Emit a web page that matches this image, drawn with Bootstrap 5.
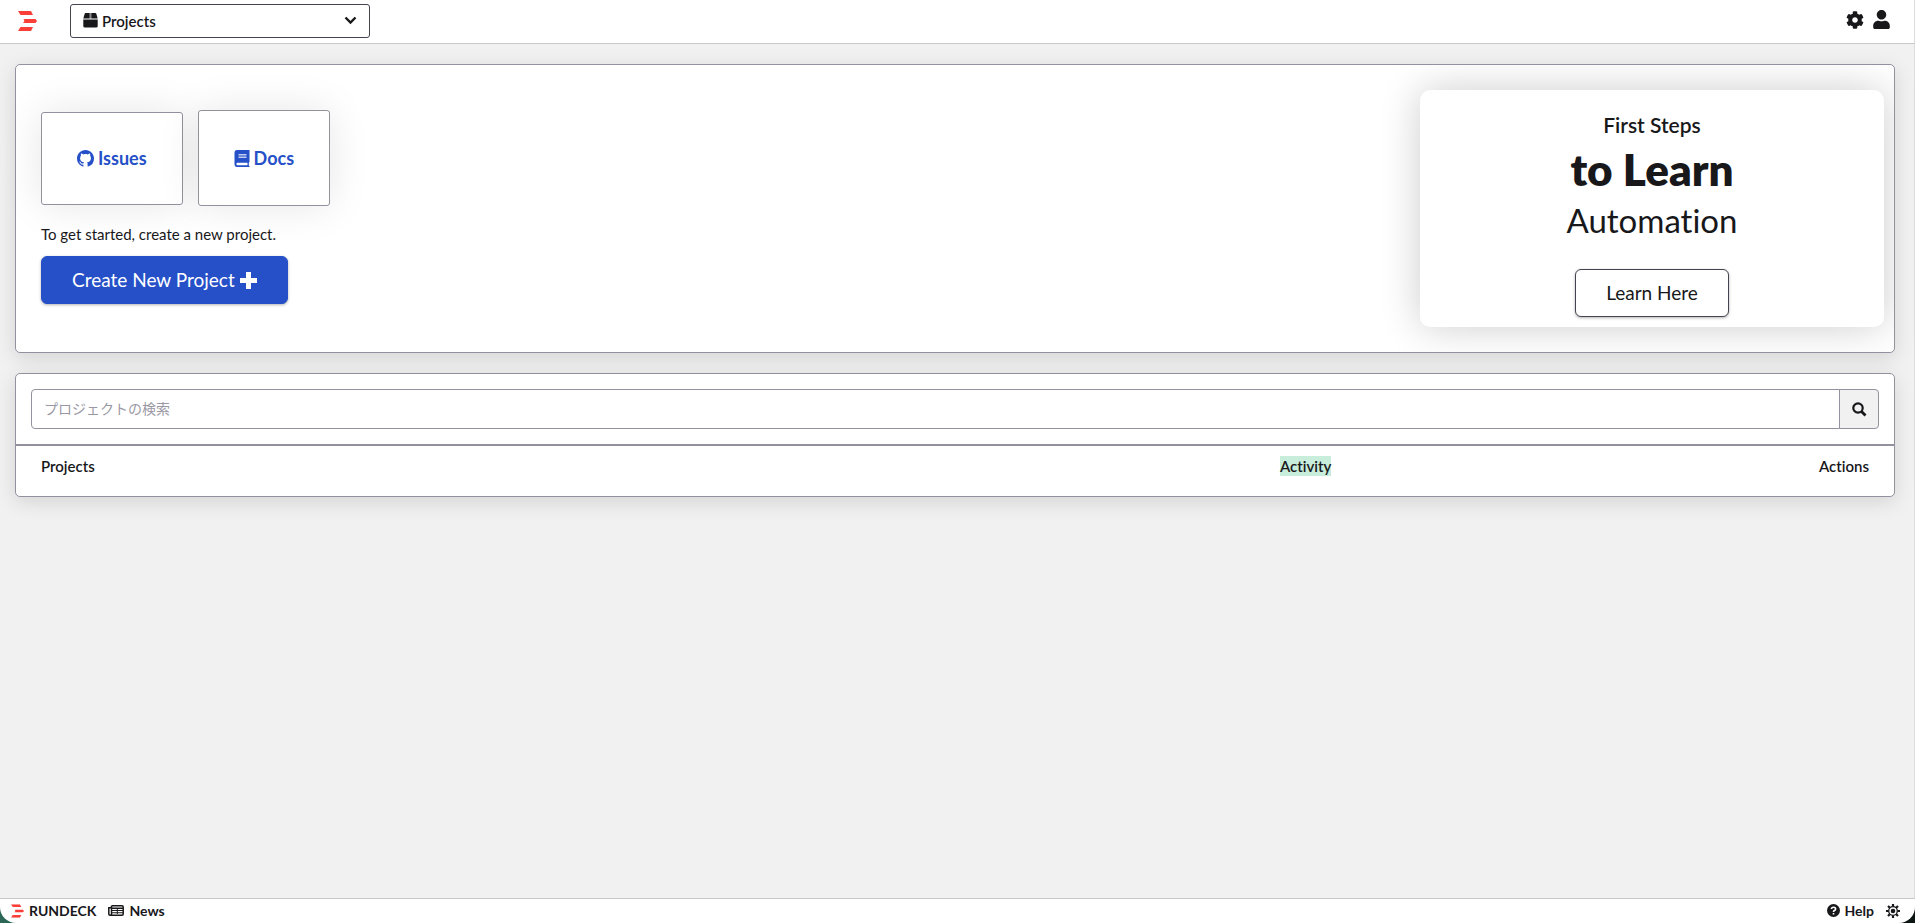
<!DOCTYPE html>
<html lang="en">
<head>
<meta charset="utf-8">
<meta name="viewport" content="width=device-width, initial-scale=1">
<title>Rundeck - Projects</title>
<link rel="stylesheet" href="https://cdn.jsdelivr.net/npm/bootstrap@5.3.0/dist/css/bootstrap.min.css">
<style>
  :root { --ink: #18181b; --line: #94919f; --blue: #2550c8; --red: #fa3f38; }
  body { font-family: Lato, "Noto Sans CJK JP", sans-serif; font-size: 15px; line-height: 20px; font-variant-ligatures: none; color: var(--ink); background: #f1f1f1; }
  svg { fill: currentColor; display: block; flex: none; }
  a { color: inherit; text-decoration: none; }
  .brand-mark { color: var(--red); }

  .top-bar { height: 44px; background: #fff; border-bottom: 1px solid #c8caca; border-right: 1px solid #dcdcdc; padding: 0 24px 4px 18px; }
  .top-bar .brand-mark { margin-right: 33px; margin-top: 3px; }
  .picker { width: 300px; height: 34px; margin-top: 2px; border: 1px solid #45434f; border-radius: 3px; background: #fff; color: var(--ink); font-weight: 600; padding: 0 12px; gap: 4px; }
  .icon-btn { border: 0; background: none; padding: 0; color: var(--ink); }

  .page-main { padding: 20px 19px 20px 15px; border-right: 1px solid #dcdcdc; gap: 20px; }
  .panel { background: #fff; border: 1px solid var(--line); border-radius: 5px; box-shadow: 0 5px 20px rgba(0, 0, 0, .12); }
  .welcome { padding: 25px 10px 25px 25px; }
  .intro { padding-top: 20px; }
  .tiles { gap: 15px; margin-bottom: 18px; }
  .tile { border: 1px solid var(--line); border-radius: 3px; background: #fff; color: var(--blue); font-size: 18px; font-weight: 700; padding: 0 35px; gap: 4px; box-shadow: 0 0 40px rgba(0, 0, 0, .1); }
  .tile-issues { height: 93px; }
  .tile-docs { height: 96px; }
  .btn-tall { height: 48px; font-size: 19px; padding: 0 30px; border-radius: 6px; box-shadow: 0 1px 3px rgba(0, 0, 0, .3); gap: 5px; }
  .btn-create { --bs-btn-bg: #2550c8; --bs-btn-border-color: #2550c8; --bs-btn-color: #fff; }
  .btn-learn { --bs-btn-border-color: #45434f; --bs-btn-color: #18181b; --bs-btn-bg: #fff; }
  .promo { width: 464px; max-width: 100%; background: #fff; border-radius: 10px; padding: 22px 0 10px; box-shadow: 0 0 40px rgba(0, 0, 0, .2); clip-path: inset(-25px -10px -25px -60px); }
  .promo-over { font-size: 21px; line-height: 26px; font-weight: 600; }
  .promo-head { font-size: 44px; line-height: 62px; font-weight: 800; margin: 0; }
  .promo-sub { font-size: 33px; line-height: 40px; margin-bottom: 29px; }

  .search-row { padding: 15px; border-bottom: 2px solid var(--line); }
  .search-row .form-control { height: 40px; border-color: var(--line); border-radius: 4px; font-size: 14px; padding: 0 12px 2px; }
  .search-row .form-control::placeholder { color: #9a98a4; opacity: 1; }
  .search-row .btn { width: 40px; padding: 0; border-color: var(--line); border-radius: 4px; background: #f1f1f1; color: var(--ink); }
  .project-list th { height: 50px; padding: 10px 25px 0 12px; font-weight: 600; vertical-align: top; }
  .project-list th:first-child { padding-left: 25px; }
  .picked { display: inline-block; background: #c8eddb; }

  .page-foot { background: linear-gradient(90deg, #2c6656 50%, #0b1512 50%); }
  .foot-bar { height: 25px; background: #fff; border-top: 1px solid #c8caca; border-radius: 0 0 16px 16px; padding: 0 15px 1px 11px; font-size: 14px; font-weight: 700; }
  .foot-link { gap: 5px; }
</style>
</head>
<body class="d-flex flex-column min-vh-100">

<svg width="0" height="0" class="position-absolute" aria-hidden="true">
  <symbol id="mark" viewBox="0 0 19 20"><path d="M0 0h13l2 4H2.500zM6.500 8H17.500l1.500 2-1.500 2H5l1.500-2-1-1.500zM2.500 16H15l-2 4H0z"/></symbol>
</svg>

<header class="top-bar d-flex align-items-center">
  <a href="#" aria-label="Home" class="brand-mark"><svg width="19" height="20"><use href="#mark"/></svg></a>
  <button type="button" class="picker d-flex align-items-center">
    <svg width="15" height="15" viewBox="0 0 15 15"><path d="M2.500 0H6.700V5.500H.3L1.700.7Q1.900 0 2.500 0zM8.300 0h4.200q.6 0 .8.700l1.400 4.800H8.300zM.3 6.500h14.400V13q0 1.500-1.500 1.500H1.800Q.3 14.500.3 13z"/><path d="M6.700 0h1.600v5.500H6.700z" opacity=".5"/></svg>
    <span>Projects</span>
    <svg class="ms-auto" width="13" height="9" viewBox="0 0 13 9"><path d="M1.500 1.500l5 5 5-5" fill="none" stroke="currentColor" stroke-width="2.400"/></svg>
  </button>
  <div class="ms-auto d-flex align-items-center gap-2">
    <button type="button" class="icon-btn" aria-label="Settings"><svg width="20" height="18" viewBox="0 0 512 512"><path d="M487.400 315.700l-42.600-24.600c4.300-23.200 4.300-47 0-70.200l42.600-24.600c4.900-2.800 7.100-8.600 5.500-14-11.100-35.600-30-67.800-54.700-94.600-3.800-4.100-10-5.100-14.800-2.300L380.800 110c-17.900-15.400-38.500-27.300-60.800-35.100V25.800c0-5.600-3.900-10.500-9.400-11.700-36.700-8.200-74.300-7.800-109.200 0-5.500 1.200-9.400 6.100-9.400 11.700V75c-22.200 7.900-42.800 19.800-60.800 35.100L88.700 85.500c-4.900-2.800-11-1.900-14.800 2.300-24.700 26.700-43.600 58.900-54.700 94.600-1.700 5.400.6 11.200 5.500 14L67.300 221c-4.300 23.200-4.300 47 0 70.200l-42.600 24.600c-4.900 2.800-7.100 8.600-5.500 14 11.100 35.600 30 67.800 54.700 94.600 3.800 4.100 10 5.100 14.800 2.300l42.600-24.600c17.900 15.400 38.500 27.300 60.800 35.100v49.200c0 5.600 3.900 10.500 9.400 11.700 36.700 8.200 74.300 7.800 109.200 0 5.500-1.200 9.400-6.100 9.400-11.700v-49.200c22.200-7.900 42.800-19.800 60.800-35.100l42.600 24.600c4.900 2.800 11 1.900 14.800-2.300 24.700-26.700 43.600-58.900 54.700-94.600 1.500-5.500-.7-11.300-5.600-14.100zM256 336c-44.100 0-80-35.900-80-80s35.900-80 80-80 80 35.900 80 80-35.900 80-80 80z"/></svg></button>
    <button type="button" class="icon-btn" aria-label="User"><svg width="17" height="19" viewBox="0 0 448 512"><path d="M224 256c70.700 0 128-57.300 128-128S294.700 0 224 0 96 57.300 96 128s57.300 128 128 128zm89.600 32h-16.700c-22.200 10.200-46.900 16-72.900 16s-50.600-5.800-72.900-16h-16.700C60.200 288 0 348.200 0 422.400V464c0 26.500 21.500 48 48 48h352c26.500 0 48-21.500 48-48v-41.600c0-74.200-60.200-134.400-134.400-134.400z"/></svg></button>
  </div>
</header>

<main class="page-main flex-grow-1 d-flex flex-column">
  <section class="panel welcome d-flex justify-content-between">
    <div class="intro">
      <div class="tiles d-flex align-items-center">
        <a href="#" class="tile tile-issues d-flex align-items-center"><svg width="17" height="17" viewBox="0 0 16 16"><path d="M8 0C3.580 0 0 3.580 0 8c0 3.540 2.290 6.530 5.470 7.590.4.070.55-.17.55-.38 0-.19-.01-.82-.01-1.490-2.010.37-2.530-.49-2.690-.94-.09-.23-.48-.94-.82-1.130-.28-.15-.68-.52-.01-.53.63-.01 1.080.58 1.230.82.72 1.210 1.870.87 2.330.66.07-.52.28-.87.51-1.070-1.780-.2-3.640-.89-3.640-3.950 0-.87.31-1.590.82-2.150-.08-.2-.36-1.020.08-2.120 0 0 .67-.21 2.200.82.64-.18 1.320-.27 2-.27s1.360.09 2 .27c1.530-1.040 2.200-.82 2.200-.82.44 1.100.16 1.920.08 2.120.51.56.82 1.270.82 2.150 0 3.070-1.870 3.750-3.650 3.950.29.25.54.73.54 1.480 0 1.070-.01 1.930-.01 2.200 0 .21.15.46.55.38A8.010 8.010 0 0 0 16 8c0-4.420-3.580-8-8-8z"/></svg>Issues</a>
        <a href="#" class="tile tile-docs d-flex align-items-center"><svg width="16" height="17" viewBox="0 0 16 17"><path fill-rule="evenodd" d="M3 0h12.500v12l-.7.800v2.700l.7.500v1H3Q.5 17 .5 14V3Q.5 0 3 0zM3.500 12.800Q2.400 12.800 2.400 14t1.100 1.200h10v-2.400z"/><path d="M4.500 4h8v1.500h-8zM4.500 6.500h8V8h-8z" fill="#c2cdf0"/></svg>Docs</a>
      </div>
      <p class="mb-2 pb-1">To get started, create a new project.</p>
      <button type="button" class="btn btn-create btn-tall d-flex align-items-center">Create New Project <svg width="17" height="17" viewBox="0 0 17 17"><path d="M6 0h5v6h6v5h-6v6H6v-6H0V6h6z"/></svg></button>
    </div>
    <aside class="promo text-center">
      <div class="promo-over">First Steps</div>
      <h2 class="promo-head">to Learn</h2>
      <div class="promo-sub">Automation</div>
      <button type="button" class="btn btn-learn btn-tall">Learn Here</button>
    </aside>
  </section>

  <section class="panel">
    <form class="search-row">
      <div class="input-group">
        <input type="text" class="form-control" placeholder="プロジェクトの検索" aria-label="プロジェクトの検索">
        <button type="button" class="btn d-flex align-items-center justify-content-center" aria-label="Search"><svg width="15" height="15" viewBox="0 0 15 15" fill="none" stroke="currentColor"><circle cx="6" cy="6" r="4.700" fill="none" stroke-width="2.200"/><path d="M9.500 9.500l4 4" stroke-width="2.800"/></svg></button>
      </div>
    </form>
    <table class="project-list w-100">
      <thead><tr>
        <th class="col-8" scope="col">Projects</th>
        <th class="col-2" scope="col"><span class="picked">Activity</span></th>
        <th class="col-2 text-end" scope="col">Actions</th>
      </tr></thead>
    </table>
  </section>
</main>

<footer class="page-foot">
  <div class="foot-bar d-flex align-items-center">
    <a href="#" class="foot-link d-flex align-items-center"><svg class="brand-mark" width="13" height="14" viewBox="0 0 19 20"><use href="#mark"/></svg>RUNDECK</a>
    <a href="#" class="foot-link d-flex align-items-center ms-2 ps-1"><svg width="16" height="11" viewBox="0 0 16 11"><path d="M3.500.8H14Q15.200.8 15.200 2v7q0 1.200-1.200 1.200H2Q.8 10.200.8 9V2.800h2.700M3.500.8V9q0 1-1 1" fill="none" stroke="currentColor" stroke-width="1.500"/><path d="M4 2.500h11V4H4zM4 5h11v1H4zM4 7.300h11v1H4zM8.800 4h1v5h-1z"/></svg>News</a>
    <a href="#" class="foot-link d-flex align-items-center ms-auto me-2 pe-1"><svg width="13" height="13" viewBox="0 0 13 13"><circle cx="6.500" cy="6.500" r="6.500"/><path d="M4.400 5Q4.500 3.200 6.500 3.200T8.600 4.900Q8.600 6 7.400 6.500 6.500 6.900 6.500 7.900M6.500 9v1.600" fill="none" stroke="#fff" stroke-width="1.600"/></svg>Help</a>
    <button type="button" class="icon-btn" aria-label="Theme"><svg width="14" height="14" viewBox="0 0 14 14"><g fill="none" stroke="currentColor"><circle cx="7" cy="7" r="4.300" stroke-width="1.300"/><path stroke-width="2.200" d="M7 0v2.500M7 11.500V14M0 7h2.500M11.500 7H14M2 2l1.800 1.800M10.200 10.200L12 12M12 2l-1.800 1.800M3.800 10.200L2 12"/></g><circle cx="7" cy="7" r="2.300"/></svg></button>
  </div>
</footer>

<script src="https://cdn.jsdelivr.net/npm/bootstrap@5.3.0/dist/js/bootstrap.bundle.min.js"></script>
</body>
</html>
